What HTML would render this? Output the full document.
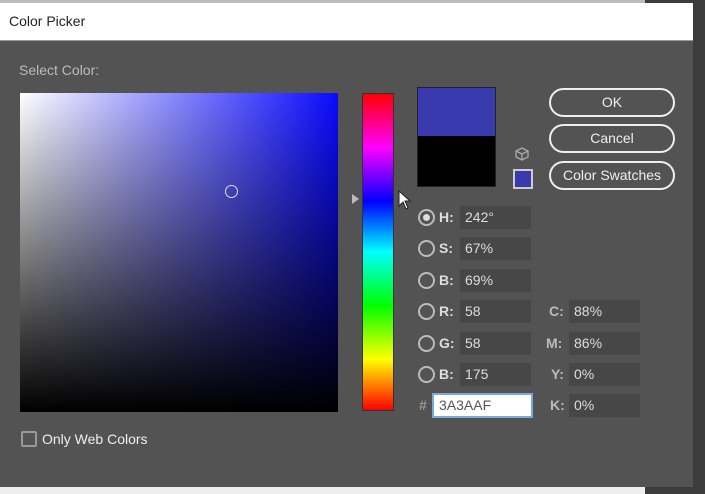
<!DOCTYPE html>
<html><head><style>
body{margin:0;width:705px;height:494px;background:#3c3c3c;position:relative;overflow:hidden;font-family:"Liberation Sans",sans-serif}
.a{position:absolute}
.t{color:#ddd;font-size:14px}
.in{position:absolute;background:#474747;height:23px;width:71px;color:#ddd;font-size:14px;line-height:23px;padding-left:5px;box-sizing:border-box}
.rd{position:absolute;width:13px;height:13px;border:2px solid #bbb;border-radius:50%}
.lb{position:absolute;color:#ddd;font-size:14px;font-weight:bold}
.bt{position:absolute;left:549px;width:126px;height:29px;border:2px solid #eee;border-radius:15px;box-sizing:border-box;color:#eee;font-size:14px;text-align:center;line-height:25px}
</style></head><body>
<div class="a" style="left:0;top:0;width:645px;height:3px;background:#bdbdbd"></div>
<div class="a" style="left:0;top:487px;width:645px;height:7px;background:#eeeeee"></div>
<div class="a" style="left:0;top:3px;width:693px;height:484px;background:#535353"></div>
<div class="a" style="left:0;top:3px;width:693px;height:37px;background:#fff;border-bottom:1px solid #999"></div>
<div class="a" style="left:9px;top:13px;font-size:14px;color:#222">Color Picker</div>
<div class="a t" style="left:19px;top:62px;color:#bbb">Select Color:</div>
<div class="a" style="left:20px;top:93px;width:318px;height:319px;background:linear-gradient(to bottom,rgba(0,0,0,0),#000),linear-gradient(to right,#fff,#0a0aff)"></div>
<div class="a" style="left:225px;top:185px;width:11px;height:11px;border:1.5px solid #ddd;border-radius:50%"></div>
<div class="a" style="left:362px;top:93px;width:32px;height:318px;border:1px solid #333;box-sizing:border-box;background:linear-gradient(to bottom,#f00,#f0f 17%,#00f 34%,#0ff 50%,#0f0 67%,#ff0 84%,#f00)"></div>
<div class="a" style="left:352px;top:194px;width:0;height:0;border-left:7px solid #bbb;border-top:5px solid transparent;border-bottom:5px solid transparent"></div>
<svg class="a" style="left:398px;top:190px" width="16" height="22" viewBox="0 0 16 22"><path d="M1 1 L1 16 L5 12 L8 19 L10 18 L7 11 L12 11 Z" fill="#fff" stroke="#222" stroke-width="1"/></svg>
<div class="a" style="left:417px;top:87px;width:77px;height:49px;background:#3a3aaf;border:1px solid #222;border-bottom:none"></div>
<div class="a" style="left:417px;top:136px;width:77px;height:50px;background:#000;border:1px solid #222;border-top:none"></div>
<svg class="a" style="left:515px;top:147px" width="14" height="14" viewBox="0 0 14 14"><path d="M7 1L13 4V10L7 13L1 10V4Z M1 4L7 7L13 4 M7 7V13" fill="none" stroke="#aaa" stroke-width="1.3"/></svg>
<div class="a" style="left:513px;top:169px;width:16px;height:16px;background:#3a3aaf;border:2px solid #ccc"></div>
<div class="bt" style="top:88px">OK</div>
<div class="bt" style="top:124px">Cancel</div>
<div class="bt" style="top:161px">Color Swatches</div>

<div class="rd" style="left:418px;top:209px"></div><div class="a" style="left:423px;top:214px;width:7px;height:7px;border-radius:50%;background:#ddd"></div>
<div class="lb" style="left:439px;top:209px">H:</div><div class="in" style="left:460px;top:206px">242°</div>
<div class="rd" style="left:418px;top:240px"></div><div class="lb" style="left:439px;top:240px">S:</div><div class="in" style="left:460px;top:237px">67%</div>
<div class="rd" style="left:418px;top:272px"></div><div class="lb" style="left:439px;top:272px">B:</div><div class="in" style="left:460px;top:269px">69%</div>
<div class="rd" style="left:418px;top:303px"></div><div class="lb" style="left:439px;top:303px">R:</div><div class="in" style="left:460px;top:300px">58</div>
<div class="rd" style="left:418px;top:335px"></div><div class="lb" style="left:439px;top:335px">G:</div><div class="in" style="left:460px;top:332px">58</div>
<div class="rd" style="left:418px;top:366px"></div><div class="lb" style="left:439px;top:366px">B:</div><div class="in" style="left:460px;top:363px">175</div>
<div class="lb" style="left:419px;top:397px;color:#999">#</div>
<div class="in" style="left:432px;top:393px;width:101px;height:25px;background:#fff;border:2px solid #7aa7e0;color:#555;line-height:21px">3A3AAF</div>
<div class="lb" style="left:549px;top:303px;color:#bbb">C:</div><div class="in" style="left:569px;top:300px">88%</div>
<div class="lb" style="left:546px;top:335px;color:#bbb">M:</div><div class="in" style="left:569px;top:332px">86%</div>
<div class="lb" style="left:551px;top:366px;color:#bbb">Y:</div><div class="in" style="left:569px;top:363px">0%</div>
<div class="lb" style="left:550px;top:397px;color:#bbb">K:</div><div class="in" style="left:569px;top:394px">0%</div>

<div class="a" style="left:21px;top:431px;width:12px;height:12px;border:2px solid #999;border-radius:2px"></div>
<div class="a t" style="left:42px;top:431px;color:#eee">Only Web Colors</div>
</body></html>
